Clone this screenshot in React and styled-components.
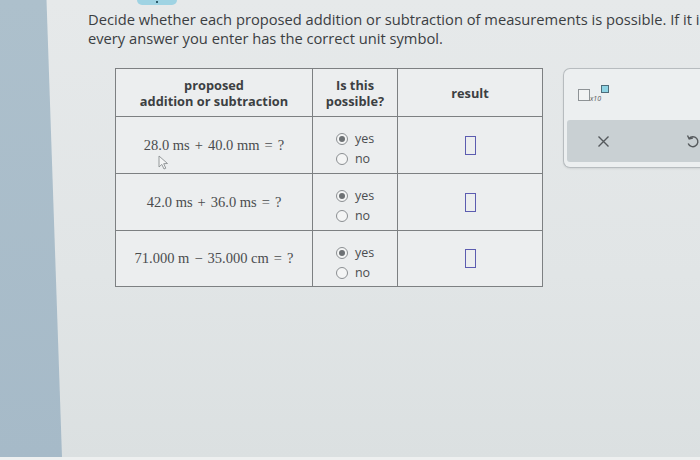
import React from "react";
import styled, { createGlobalStyle } from "styled-components";

const rows = [
  { left: "28.0 ms", op: "+", right: "40.0 mm", cursor: true },
  { left: "42.0 ms", op: "+", right: "36.0 ms" },
  { left: "71.000 m", op: "−", right: "35.000 cm" },
];

const Global = createGlobalStyle`
  html, body {
    margin: 0;
    padding: 0;
    width: 700px;
    height: 460px;
    overflow: hidden;
    background: #dfe3e4;
  }
  #root {
    height: 100%;
  }
`;

const Screen = styled.div`
  display: flex;
  width: 700px;
  height: 460px;
  overflow: hidden;
  background: linear-gradient(180deg, #e6e9ea 0%, #e1e5e6 60%, #dbe0e1 100%);
  border-bottom: 3px solid #eef0f0;
  box-sizing: border-box;
`;

const Strip = styled.div`
  flex: 0 0 62px;
  background: linear-gradient(180deg, #adc0cc 0%, #a6bac8 100%);
  clip-path: polygon(0 0, 75% 0, 100% 100%, 0 100%);
`;

const Main = styled.div`
  flex: 1;
  min-width: 0;
  display: flex;
  flex-direction: column;
  padding-left: 26px;
  position: relative;
`;

const TopButton = styled.div`
  position: absolute;
  left: 75px;
  top: -8px;
  width: 40px;
  height: 13px;
  border-radius: 5px;
  background: #9fd3e3;
  &::after {
    content: "";
    position: absolute;
    left: 19px;
    top: 9px;
    width: 2px;
    height: 2px;
    background: #2c5a6a;
  }
`;

const Intro = styled.p`
  margin: 10px 0 0 0;
  font-family: "Open Sans", sans-serif;
  font-size: 14.7px;
  line-height: 19px;
  color: #3b3e42;
  white-space: nowrap;
`;

const Body = styled.div`
  display: flex;
  align-items: flex-start;
  margin-top: 20px;
  margin-left: 27px;
  gap: 20px;
`;

const Table = styled.table`
  flex: none;
  border-collapse: collapse;
  background: #eceeef;
  & td, & th {
    border: 1px solid #7d8082;
    padding: 0;
  }
`;

const Head = styled.th`
  width: ${(p) => p.$w}px;
  height: 47px;
  font-family: "Open Sans", sans-serif;
  font-weight: 700;
  font-size: 12.8px;
  line-height: 16px;
  color: #3c3f42;
  text-align: center;
`;

const ExprCell = styled.td`
  height: ${(p) => p.$h}px;
  text-align: center;
  position: relative;
  font-family: "Liberation Serif", serif;
  font-size: 14.5px;
  color: #4a4c4e;
`;

const Op = styled.span`
  margin: 0 5px;
`;

const Cursor = styled.svg`
  position: absolute;
  left: 42px;
  top: 38px;
`;

const RadioCell = styled.td`
  text-align: center;
  padding-top: 4px !important;
`;

const RadioGroup = styled.div`
  display: inline-flex;
  flex-direction: column;
  gap: 6px;
  align-items: flex-start;
`;

const Option = styled.div`
  display: flex;
  align-items: center;
  gap: 7px;
  font-family: "Open Sans", sans-serif;
  font-size: 12.5px;
  line-height: 14px;
  color: #4a4d50;
`;

const Dot = styled.span`
  width: 12px;
  height: 12px;
  border-radius: 50%;
  border: 1px solid #8b8f92;
  box-sizing: border-box;
  background: #f4f5f5;
  display: flex;
  align-items: center;
  justify-content: center;
  &::after {
    content: "";
    width: 6px;
    height: 6px;
    border-radius: 50%;
    background: ${(p) => (p.$on ? "#6d7174" : "transparent")};
  }
`;

const ResultCell = styled.td`
  text-align: center;
`;

const AnswerBox = styled.span`
  display: inline-block;
  width: 9px;
  height: 17px;
  border: 1.5px solid #5c5cb0;
  margin-top: 4px;
`;

const Panel = styled.div`
  flex: none;
  width: 160px;
  height: 98px;
  border: 1px solid #b7bcbf;
  border-right: none;
  border-radius: 7px 0 0 7px;
  background: #eceff0;
  display: flex;
  flex-direction: column;
  box-shadow: 0 1px 2px rgba(0, 0, 0, 0.08);
`;

const Sci = styled.div`
  display: flex;
  align-items: flex-start;
  padding: 16px 0 0 14px;
  height: 51px;
  box-sizing: border-box;
  font-family: "Open Sans", sans-serif;
  font-size: 7px;
  font-style: italic;
  color: #55595c;
  line-height: 7px;
`;

const Square = styled.span`
  margin-top: 4px;
  width: 12px;
  height: 12px;
  border: 1px solid #8e9396;
  box-sizing: border-box;
  background: #f2f3f3;
`;

const Times = styled.span`
  margin-top: 10px;
`;

const Exp = styled.span`
  width: 8px;
  height: 8px;
  border: 1px solid #4d6c7a;
  box-sizing: border-box;
  background: #8ed3e3;
`;

const Tools = styled.div`
  margin-left: 3px;
  height: 42px;
  background: #c9d0d3;
  border-radius: 3px 0 0 3px;
  display: flex;
  align-items: center;
  gap: 76px;
  padding-left: 30px;
`;

export default function App() {
  return (
    <>
      <Global />
      <Screen>
        <Strip />
        <Main>
          <TopButton />
          <Intro>
            Decide whether each proposed addition or subtraction of measurements is possible. If it is possible,
            <br />
            every answer you enter has the correct unit symbol.
          </Intro>
          <Body>
            <Table>
              <thead>
                <tr>
                  <Head $w={196}>
                    proposed
                    <br />
                    addition or subtraction
                  </Head>
                  <Head $w={84}>
                    Is this
                    <br />
                    possible?
                  </Head>
                  <Head $w={144}>result</Head>
                </tr>
              </thead>
              <tbody>
                {rows.map((r, i) => (
                  <tr key={i}>
                    <ExprCell $h={i === 2 ? 55 : 56}>
                      {r.left}
                      <Op>{r.op}</Op>
                      {r.right}
                      <Op>=</Op>?
                      {r.cursor && (
                        <Cursor width="11" height="15" viewBox="0 0 11 15">
                          <path
                            d="M1 1 L1 12 L3.8 9.4 L6 14 L7.8 13.2 L5.7 8.7 L9.5 8.5 Z"
                            fill="#f4f5f5"
                            stroke="#8a8e91"
                            strokeWidth="0.9"
                            strokeLinejoin="round"
                          />
                        </Cursor>
                      )}
                    </ExprCell>
                    <RadioCell>
                      <RadioGroup>
                        <Option>
                          <Dot $on />
                          yes
                        </Option>
                        <Option>
                          <Dot />
                          no
                        </Option>
                      </RadioGroup>
                    </RadioCell>
                    <ResultCell>
                      <AnswerBox />
                    </ResultCell>
                  </tr>
                ))}
              </tbody>
            </Table>
            <Panel>
              <Sci>
                <Square />
                <Times>x10</Times>
                <Exp />
              </Sci>
              <Tools>
                <svg width="13" height="13" viewBox="0 0 13 13">
                  <path d="M1.5 1.5 L11.5 11.5 M11.5 1.5 L1.5 11.5" stroke="#55595c" strokeWidth="1.4" />
                </svg>
                <svg width="13" height="15" viewBox="0 0 13 15">
                  <path d="M3 4.5 A5 5 0 1 1 2.2 9.5" fill="none" stroke="#55595c" strokeWidth="1.4" />
                  <path d="M1.5 1.5 L3.2 5 L6.8 4" fill="none" stroke="#55595c" strokeWidth="1.4" />
                </svg>
              </Tools>
            </Panel>
          </Body>
        </Main>
      </Screen>
    </>
  );
}
